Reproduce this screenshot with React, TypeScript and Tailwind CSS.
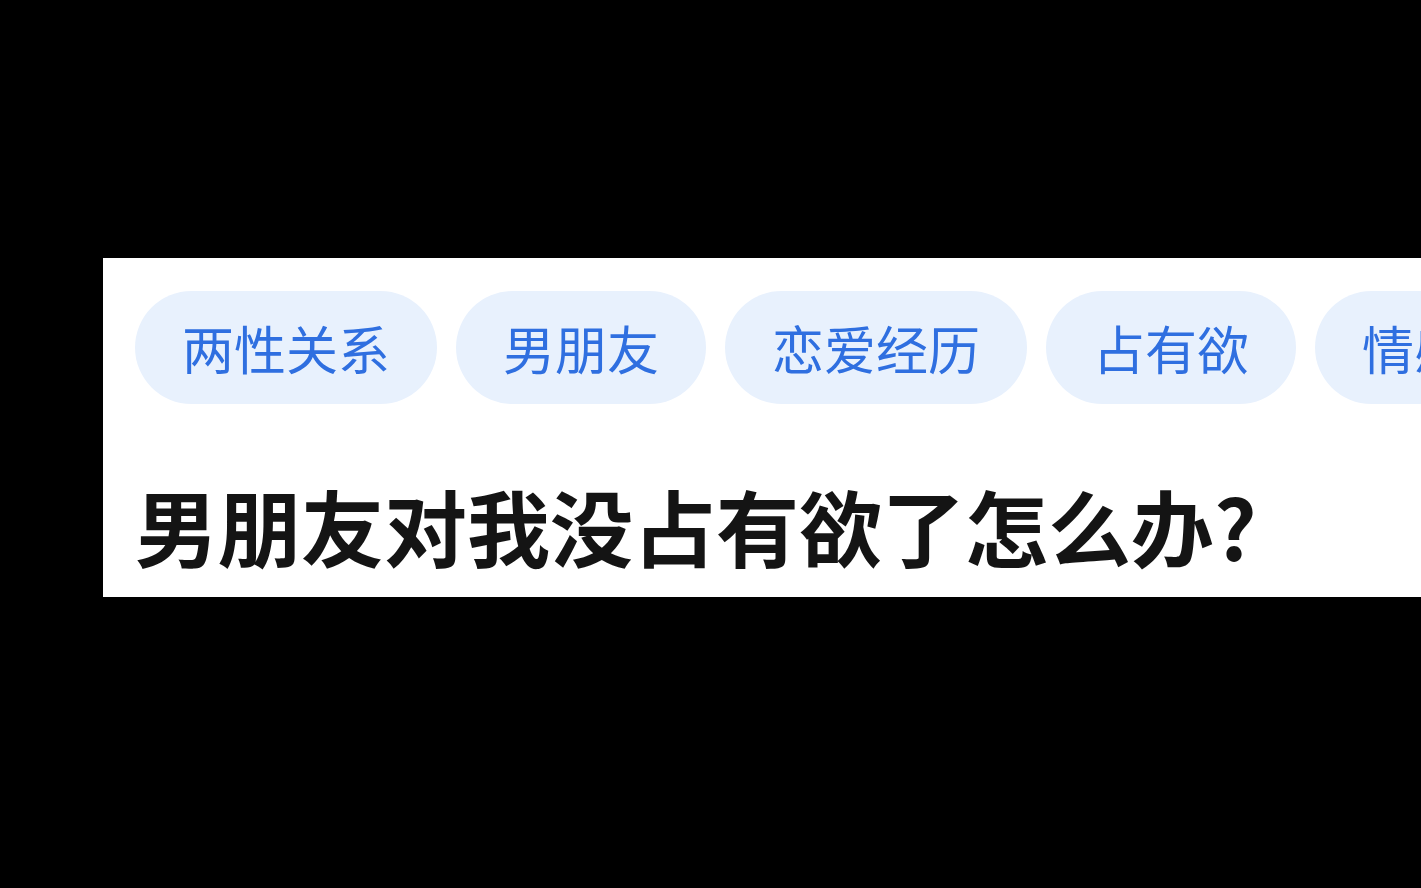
import React from "react";

const tags = ["两性关系", "男朋友", "恋爱经历", "占有欲", "情感"];

export default function App() {
  return (
    <div
      className="w-[1421px] h-[888px] bg-black overflow-hidden flex flex-col pt-[258px] pl-[103px]"
      style={{ fontFamily: '"Microsoft YaHei", "Noto Sans CJK SC", "Noto Sans", sans-serif' }}
    >
      <div className="bg-white h-[339px] w-[1400px] flex-none overflow-hidden pl-[32px] pt-[33px]">
        <div className="flex flex-nowrap gap-[19px]">
          {tags.map((t) => (
            <div
              key={t}
              className="flex-none h-[113px] px-[47px] rounded-full bg-[#e8f1fd] text-[#2f6fe0] text-[52px] leading-none flex items-center whitespace-nowrap"
            >
              {t}
            </div>
          ))}
        </div>
        <div className="mt-[80px] text-[83px] leading-none font-bold text-[#141414] whitespace-nowrap">
          男朋友对我没占有欲了怎么办?
        </div>
      </div>
    </div>
  );
}
